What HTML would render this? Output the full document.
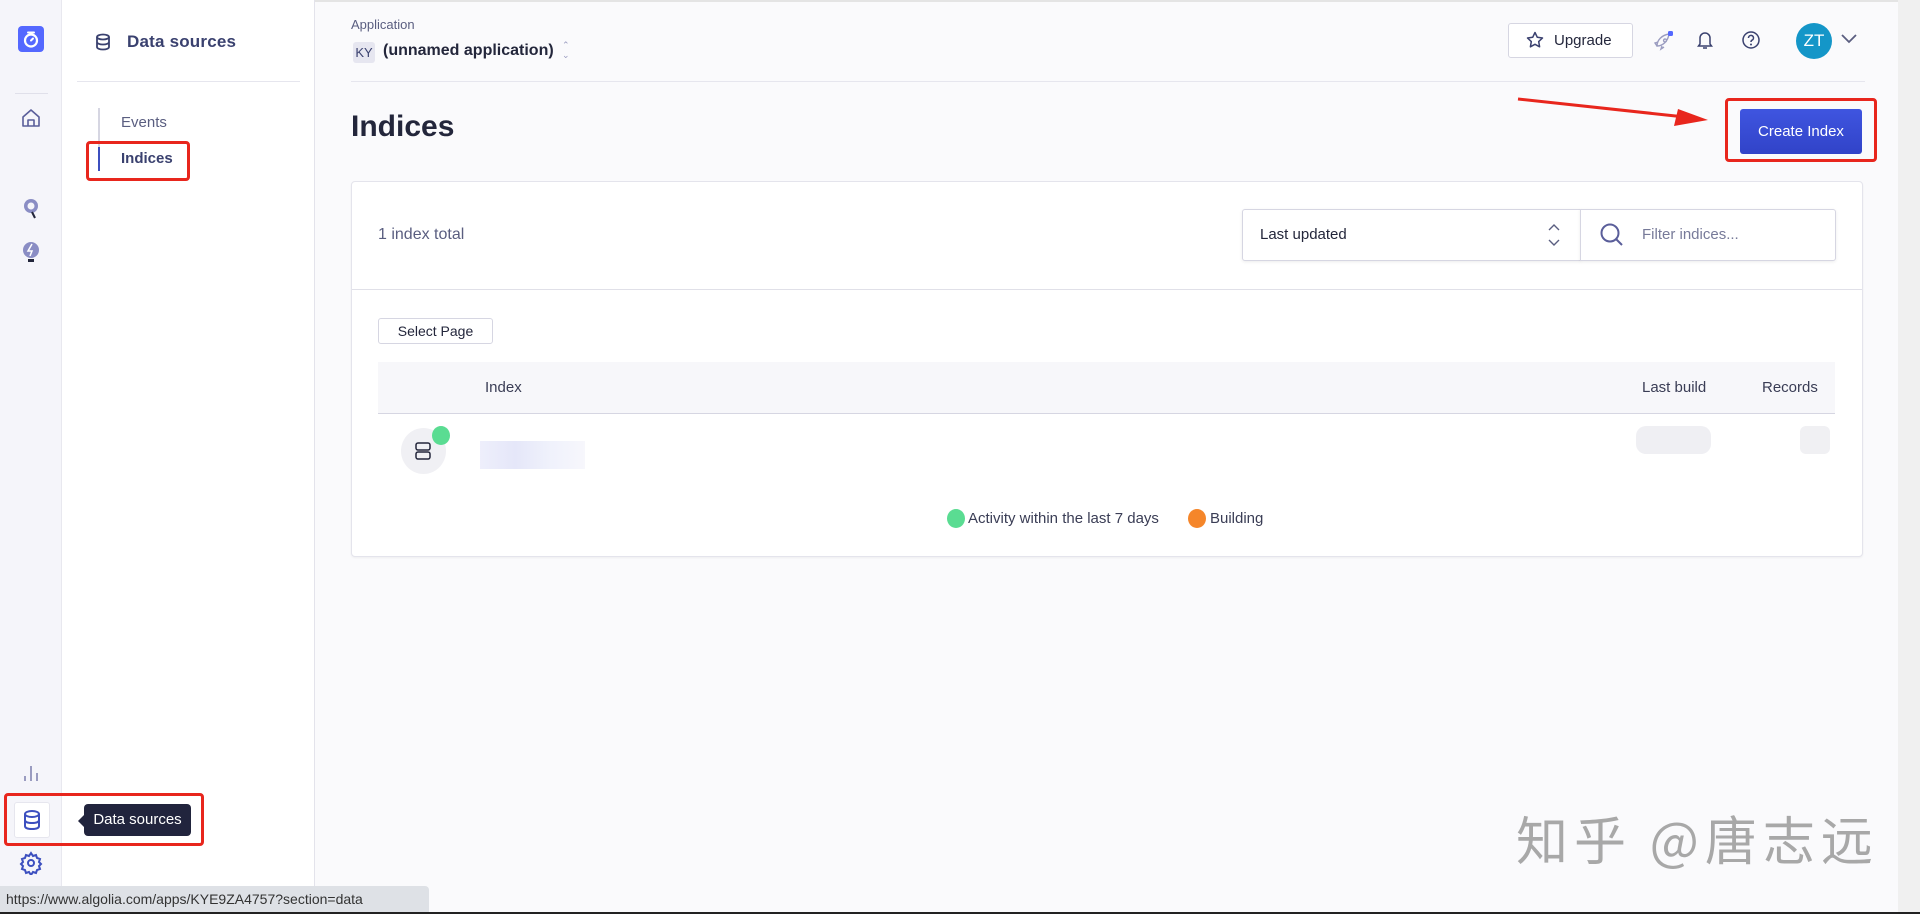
<!DOCTYPE html>
<html><head><meta charset="utf-8"><style>
*{box-sizing:border-box;margin:0;padding:0}
body{width:1920px;height:914px;overflow:hidden;background:#fafafc;font-family:"Liberation Sans","Noto Sans CJK SC",sans-serif;position:relative;color:#23263b}
.a{position:absolute}
.rail{left:0;top:0;width:62px;height:914px;background:#f5f5fa;border-right:1px solid #e8e8ef}
.side{left:62px;top:0;width:253px;height:914px;background:#fff;border-right:1px solid #e3e3eb}
.red{border:3px solid #e8261d;border-radius:4px}
.ic{stroke:#5a5e9a;fill:none;stroke-width:1.6;stroke-linecap:round;stroke-linejoin:round}
</style></head><body>
<div class="a" style="left:0;top:0;width:1920px;height:2px;background:#e4e4e4"></div>
<div class="a side"></div>
<div class="a rail"></div>
<div class="a" style="left:18px;top:26px;width:26px;height:26px;background:#5468ff;border-radius:4px"></div>
<svg class="a" style="left:18px;top:26px" width="26" height="26"><circle cx="13" cy="14.5" r="6" stroke="#fff" stroke-width="2.2" fill="none"/><path d="M10 6.5h6M13 14.5l2-2" stroke="#fff" stroke-width="2" stroke-linecap="round"/></svg>
<div class="a" style="left:15px;top:93px;width:33px;height:1px;background:#e0e0ea"></div>
<svg class="a ic" style="left:20px;top:107px" width="22" height="22"><path d="M3 10L11 3l8 7v9H3z M8 19v-6h6v6"/></svg>
<svg class="a" style="left:21px;top:197px" width="20" height="24"><circle cx="10" cy="9" r="7" fill="#8a8dc4"/><circle cx="10" cy="9" r="3.5" fill="#f5f5fa"/><path d="M11 15l3 6" stroke="#23263b" stroke-width="2"/></svg>
<svg class="a" style="left:21px;top:240px" width="20" height="26"><circle cx="10" cy="10" r="8" fill="#8a8dc4"/><path d="M11 4l-4 7h4l-2 5" stroke="#fff" stroke-width="1.5" fill="none"/><rect x="7" y="19" width="6" height="3" fill="#23263b"/></svg>
<svg class="a" style="left:22px;top:763px" width="18" height="20"><path d="M3 18v-5M9 18V3M15 18v-8" stroke="#9a9cc0" stroke-width="2"/></svg>
<div class="a" style="left:14px;top:802px;width:36px;height:36px;background:#fff;border:1px solid #e6e6ee;border-radius:3px"></div>
<svg class="a" style="left:21px;top:809px" width="22" height="22"><g stroke="#3c4fbf" stroke-width="2" fill="none"><ellipse cx="11" cy="5" rx="7" ry="3"/><path d="M4 5v12c0 2 3 3 7 3s7-1 7-3V5M4 11c0 2 3 3 7 3s7-1 7-3"/></g></svg>
<svg class="a" style="left:19px;top:851px" width="24" height="24"><g stroke="#3c4fbf" stroke-width="2" fill="none"><circle cx="12" cy="12" r="3"/><path d="M12 2l2 3 3-1 1 3 3 1-1 3 2 2-2 2 1 3-3 1-1 3-3-1-2 3-2-3-3 1-1-3-3-1 1-3-2-2 2-2-1-3 3-1 1-3 3 1z"/></g></svg>
<div class="a red" style="left:4px;top:793px;width:200px;height:53px"></div>
<div class="a" style="left:84px;top:804px;width:107px;height:32px;background:#21243d;border-radius:4px;color:#fff;font-size:15px;line-height:32px;text-align:center">Data sources</div>
<div class="a" style="left:78px;top:815px;width:0;height:0;border:6px solid transparent;border-right-color:#21243d;border-left:0"></div>

<svg class="a" style="left:95px;top:33px" width="16" height="18"><g stroke="#3a416f" stroke-width="1.8" fill="none"><ellipse cx="8" cy="4" rx="6" ry="2.5"/><path d="M2 4v10c0 1.5 2.7 2.5 6 2.5s6-1 6-2.5V4M2 9c0 1.5 2.7 2.5 6 2.5s6-1 6-2.5"/></g></svg>
<div class="a" style="left:127px;top:32px;font-size:17px;color:#3a416f;font-weight:bold;letter-spacing:.2px">Data sources</div>
<div class="a" style="left:77px;top:81px;width:223px;height:1px;background:#e6e6ee"></div>
<div class="a" style="left:98px;top:108px;width:2px;height:63px;background:#d6d6e2"></div>
<div class="a" style="left:98px;top:147px;width:2px;height:24px;background:#3c4fbf"></div>
<div class="a" style="left:121px;top:114px;font-size:15px;color:#5a5e80">Events</div>
<div class="a" style="left:121px;top:150px;font-size:15px;color:#3a416f;font-weight:bold">Indices</div>
<div class="a red" style="left:86px;top:141px;width:104px;height:40px"></div>

<div class="a" style="left:351px;top:17px;font-size:13px;color:#5a5e80">Application</div>
<div class="a" style="left:353px;top:42px;width:22px;height:21px;background:#e6e6f0;border-radius:3px;font-size:13px;line-height:21px;text-align:center;color:#3a416f">KY</div>
<div class="a" style="left:383px;top:42px;font-size:16px;font-weight:bold;color:#23263b">(unnamed application)</div>
<div class="a" style="left:562px;top:40px;font-size:9px;color:#9a9cc0;line-height:10px">⌃<br>⌄</div>
<div class="a" style="left:351px;top:81px;width:1514px;height:1px;background:#e6e6ee"></div>

<div class="a" style="left:1508px;top:23px;width:125px;height:35px;background:#fff;border:1px solid #d6d6e2;border-radius:3px;font-size:15px;line-height:33px;color:#23263b;padding-left:45px">Upgrade</div>
<svg class="a" style="left:1526px;top:31px" width="18" height="18"><path d="M9 1.5l2.3 4.8 5.2.7-3.8 3.6.9 5.2L9 13.3 4.4 15.8l.9-5.2L1.5 7l5.2-.7z" stroke="#3a416f" stroke-width="1.5" fill="none" stroke-linejoin="round"/></svg>
<svg class="a" style="left:1651px;top:29px" width="24" height="24"><path d="M6 17c0-6 5-11 12-12-1 7-6 12-12 12zM7 13l-3 1 2 3M11 17l-1 3 3-2M14 10a1.5 1.5 0 1 0 .1 0" stroke="#9a9cc0" stroke-width="1.4" fill="none"/><rect x="17" y="2" width="5" height="5" rx="1.5" fill="#5468ff"/></svg>
<svg class="a" style="left:1696px;top:30px" width="18" height="20"><path d="M4 14V8a5 5 0 0 1 10 0v6l1.5 2h-13zM7 18h4" stroke="#3a416f" stroke-width="1.5" fill="none"/></svg>
<svg class="a" style="left:1741px;top:30px" width="20" height="20"><circle cx="10" cy="10" r="8" stroke="#3a416f" stroke-width="1.5" fill="none"/><path d="M7.5 8a2.5 2.5 0 1 1 3.5 2.2c-.8.4-1 .9-1 1.8" stroke="#3a416f" stroke-width="1.5" fill="none"/><circle cx="10" cy="14.5" r="1" fill="#3a416f"/></svg>
<div class="a" style="left:1796px;top:23px;width:36px;height:36px;border-radius:50%;background:#1496c8;color:#fff;font-size:17px;line-height:36px;text-align:center">ZT</div>
<svg class="a" style="left:1841px;top:34px" width="16" height="10"><path d="M1 1l7 7 7-7" stroke="#5a5e80" stroke-width="1.8" fill="none"/></svg>

<div class="a" style="left:351px;top:110px;font-size:30px;font-weight:bold;color:#23263b">Indices</div>
<div class="a" style="left:1740px;top:109px;width:122px;height:45px;background:linear-gradient(#3f55e0,#3143c8);border-radius:3px;color:#fff;font-size:15px;line-height:45px;text-align:center">Create Index</div>
<div class="a red" style="left:1725px;top:98px;width:152px;height:64px"></div>
<svg class="a" style="left:1510px;top:92px" width="210" height="40"><path d="M8 7L175 25" stroke="#e8261d" stroke-width="3"/><path d="M198 28L168 17l-4 17z" fill="#e8261d"/></svg>

<div class="a" style="left:351px;top:181px;width:1512px;height:376px;background:#fff;border:1px solid #e4e4ec;border-radius:4px;box-shadow:0 1px 2px rgba(0,0,0,.05)"></div>
<div class="a" style="left:378px;top:226px;font-size:16px;color:#5a5e80">1 index total</div>
<div class="a" style="left:1242px;top:209px;width:339px;height:52px;background:#fff;border:1px solid #d6d6e2;border-radius:3px 0 0 3px;box-shadow:0 1px 3px rgba(0,0,0,.08);font-size:15px;line-height:50px;padding-left:17px;color:#23263b">Last updated</div>
<svg class="a" style="left:1547px;top:222px" width="14" height="26"><path d="M2 8l5-5 5 5M2 18l5 5 5-5" stroke="#5a5e80" stroke-width="1.4" fill="none"/></svg>
<div class="a" style="left:1580px;top:209px;width:256px;height:52px;background:#fff;border:1px solid #d6d6e2;border-radius:0 3px 3px 0;box-shadow:0 1px 3px rgba(0,0,0,.08);font-size:15px;line-height:50px;padding-left:61px;color:#777a99">Filter indices...</div>
<svg class="a" style="left:1599px;top:222px" width="26" height="26"><circle cx="11" cy="11" r="8.5" stroke="#5a5e9a" stroke-width="2" fill="none"/><path d="M17 17l6 6" stroke="#5a5e9a" stroke-width="2"/></svg>
<div class="a" style="left:352px;top:289px;width:1510px;height:1px;background:#e0e0e8"></div>
<div class="a" style="left:378px;top:318px;width:115px;height:26px;background:#fff;border:1px solid #d6d6e2;border-radius:3px;font-size:14px;line-height:24px;text-align:center;color:#23263b">Select Page</div>
<div class="a" style="left:378px;top:362px;width:1457px;height:52px;background:#f7f7fa;border-bottom:1px solid #d6d6e2"></div>
<div class="a" style="left:485px;top:379px;font-size:15px;color:#3a3d55">Index</div>
<div class="a" style="left:1642px;top:379px;font-size:15px;color:#3a3d55">Last build</div>
<div class="a" style="left:1762px;top:379px;font-size:15px;color:#3a3d55">Records</div>
<div class="a" style="left:401px;top:428px;width:45px;height:46px;border-radius:50%;background:#f0f0f4"></div>
<svg class="a" style="left:413px;top:440px" width="20" height="22"><g stroke="#23263b" stroke-width="1.5" fill="none"><rect x="3" y="3" width="14" height="7" rx="2"/><rect x="3" y="12" width="14" height="7" rx="2"/></g></svg>
<div class="a" style="left:432px;top:426px;width:18px;height:19px;border-radius:50%;background:#5adc92"></div>
<div class="a" style="left:480px;top:441px;width:105px;height:28px;background:linear-gradient(90deg,#ecedfb,#e2e4f8,#eef0fb,#f6f6fc);opacity:.9"></div>
<div class="a" style="left:1636px;top:426px;width:75px;height:28px;background:#efeff3;border-radius:10px"></div>
<div class="a" style="left:1800px;top:426px;width:30px;height:28px;background:#f0f0f3;border-radius:6px"></div>
<div class="a" style="left:947px;top:509px;width:18px;height:19px;border-radius:50%;background:#5adc92"></div>
<div class="a" style="left:968px;top:510px;font-size:15px;color:#3a3d55">Activity within the last 7 days</div>
<div class="a" style="left:1188px;top:509px;width:18px;height:19px;border-radius:50%;background:#f5862a"></div>
<div class="a" style="left:1210px;top:510px;font-size:15px;color:#3a3d55">Building</div>

<div class="a" style="left:1516px;top:800px;font-size:52px;color:#a8a8a8;letter-spacing:6px;font-family:'Noto Sans CJK SC',sans-serif">知乎 @唐志远</div>

<div class="a" style="left:1898px;top:0;width:22px;height:912px;background:#f0f0f0"></div>
<div class="a" style="left:0;top:886px;width:429px;height:26px;background:#dee1e6;border-radius:0 4px 0 0;font-size:14px;line-height:26px;padding-left:6px;color:#333">https://www.algolia.com/apps/KYE9ZA4757?section=data</div>
<div class="a" style="left:0;top:912px;width:1920px;height:2px;background:#222"></div>
</body></html>
